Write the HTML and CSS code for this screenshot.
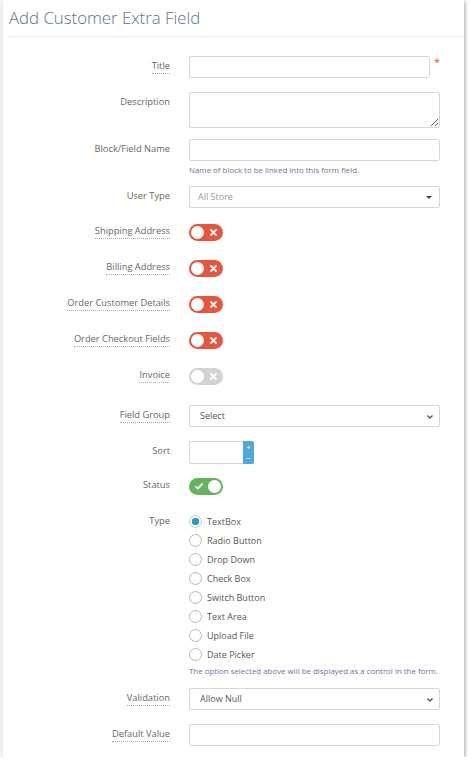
FILE: index.html
```html
<!DOCTYPE html>
<html lang="en">
<head>
  <meta charset="UTF-8">
  <meta name="viewport" content="width=device-width, initial-scale=1.0">
  <title>Add Customer Extra Field</title>
  <link rel="stylesheet" href="styles.css">
</head>
<body>
  <div class="panel">
    <div class="panel-heading">
      <h1>Add Customer Extra Field</h1>
    </div>

    <form class="form">
      <div class="row">
        <label class="label"><span class="hint">Title</span></label>
        <div class="with-star">
          <input type="text" class="control short">
          <span class="required">*</span>
        </div>
      </div>

      <div class="row">
        <label class="label">Description</label>
        <textarea class="control area"></textarea>
      </div>

      <div class="row gap-11">
        <label class="label">Block/Field Name</label>
        <div>
          <input type="text" class="control">
          <p class="help">Name of block to be linked into this form field.</p>
        </div>
      </div>

      <div class="row gap-10">
        <label class="label">User Type</label>
        <div class="control select placeholder">All Store <span class="caret"></span></div>
      </div>

      <div class="row toggle-row">
        <label class="label"><span class="hint">Shipping Address</span></label>
        <span class="toggle off"><svg width="7" height="7" viewBox="0 0 7 7"><path d="M1 1 L6 6 M6 1 L1 6" stroke="#fff" stroke-width="1.8" stroke-linecap="round"/></svg></span>
      </div>
      <div class="row toggle-row gap-16">
        <label class="label"><span class="hint">Billing Address</span></label>
        <span class="toggle off"><svg width="7" height="7" viewBox="0 0 7 7"><path d="M1 1 L6 6 M6 1 L1 6" stroke="#fff" stroke-width="1.8" stroke-linecap="round"/></svg></span>
      </div>
      <div class="row toggle-row gap-16">
        <label class="label"><span class="hint">Order Customer Details</span></label>
        <span class="toggle off"><svg width="7" height="7" viewBox="0 0 7 7"><path d="M1 1 L6 6 M6 1 L1 6" stroke="#fff" stroke-width="1.8" stroke-linecap="round"/></svg></span>
      </div>
      <div class="row toggle-row gap-16">
        <label class="label"><span class="hint">Order Checkout Fields</span></label>
        <span class="toggle off"><svg width="7" height="7" viewBox="0 0 7 7"><path d="M1 1 L6 6 M6 1 L1 6" stroke="#fff" stroke-width="1.8" stroke-linecap="round"/></svg></span>
      </div>
      <div class="row toggle-row gap-16">
        <label class="label"><span class="hint">Invoice</span></label>
        <span class="toggle disabled"><svg width="7" height="7" viewBox="0 0 7 7"><path d="M1 1 L6 6 M6 1 L1 6" stroke="#fff" stroke-width="1.8" stroke-linecap="round"/></svg></span>
      </div>

      <div class="row gap-19">
        <label class="label"><span class="hint">Field Group</span></label>
        <div class="control select">Select
          <svg class="chevron" width="8" height="6" viewBox="0 0 8 6"><path d="M1.5 1.5 L4 4 L6.5 1.5" fill="none" stroke="#555" stroke-width="1.4"/></svg>
        </div>
      </div>

      <div class="row">
        <label class="label">Sort</label>
        <div class="spinner">
          <input type="text" class="control">
          <span class="spin-btn"><span>+</span><span>&minus;</span></span>
        </div>
      </div>

      <div class="row toggle-row gap-12">
        <label class="label">Status</label>
        <span class="toggle on"><svg width="8" height="7" viewBox="0 0 8 7"><path d="M1 3.8 L3 5.6 L7 1.2" fill="none" stroke="#fff" stroke-width="1.8" stroke-linecap="round" stroke-linejoin="round"/></svg></span>
      </div>

      <div class="row gap-16">
        <label class="label radio-label">Type</label>
        <div>
          <ul class="radios">
            <li><span class="radio checked"></span>TextBox</li>
            <li><span class="radio"></span>Radio Button</li>
            <li><span class="radio"></span>Drop Down</li>
            <li><span class="radio"></span>Check Box</li>
            <li><span class="radio"></span>Switch Button</li>
            <li><span class="radio"></span>Text Area</li>
            <li><span class="radio"></span>Upload File</li>
            <li><span class="radio"></span>Date Picker</li>
          </ul>
          <p class="help">The option selected above will be displayed as a control in the form.</p>
        </div>
      </div>

      <div class="row gap-11">
        <label class="label"><span class="hint">Validation</span></label>
        <div class="control select">Allow Null
          <svg class="chevron" width="8" height="6" viewBox="0 0 8 6"><path d="M1.5 1.5 L4 4 L6.5 1.5" fill="none" stroke="#555" stroke-width="1.4"/></svg>
        </div>
      </div>

      <div class="row">
        <label class="label"><span class="hint">Default Value</span></label>
        <input type="text" class="control">
      </div>
    </form>
  </div>
</body>
</html>
```

FILE: styles.css
```css
body {
  margin: 0;
  background: #fff;
  font-family: "Open Sans", Arial, sans-serif;
  font-size: 9.3px;
  color: #555;
}
.panel {
  margin-left: 2px;
  width: 462px;
  height: 757px;
  background: #fff;
  box-shadow: 1px 1px 4px rgba(0, 0, 0, 0.35);
  border-left: 1px solid #eee;
  box-sizing: border-box;
}
.panel-heading {
  margin-left: 6px;
  height: 36px;
  border-bottom: 1px solid #eee;
}
h1 {
  margin: 0;
  padding-top: 6px;
  font-size: 16.8px;
  font-weight: 300;
  color: #5d7185;
}
.form {
  padding-top: 19px;
}
.row {
  display: grid;
  grid-template-columns: 167px 251px;
  column-gap: 19px;
  margin-top: 14px;
}
.row:first-child {
  margin-top: 0;
}
.gap-10 { margin-top: 10px; }
.gap-11 { margin-top: 11px; }
.gap-12 { margin-top: 12px; }
.gap-16 { margin-top: 16px; }
.gap-19 { margin-top: 19px; }
.label {
  text-align: right;
  line-height: 14px;
  padding-top: 3px;
  color: #666;
}
.hint {
  border-bottom: 1px dotted #aaa;
  padding-bottom: 1px;
}
.control {
  display: block;
  box-sizing: border-box;
  width: 251px;
  height: 22px;
  margin: 0;
  border: 1px solid #d6d6d6;
  border-radius: 2px;
  font-family: inherit;
  font-size: 9px;
  color: #555;
  background: #fff;
}
.with-star {
  display: flex;
  align-items: flex-start;
}
.control.short {
  width: 244px;
}
.required {
  color: #e0534d;
  font-size: 11px;
  line-height: 12px;
  margin-left: 4px;
}
.area {
  height: 36px;
  resize: vertical;
}
.help {
  margin: 3px 0 0;
  font-size: 7.9px;
  line-height: 12px;
  color: #7d6c9c;
  white-space: nowrap;
}
.select {
  position: relative;
  line-height: 20px;
  padding-left: 10px;
}
.placeholder {
  color: #999;
  padding-left: 8px;
}
.caret {
  position: absolute;
  right: 7px;
  top: 9px;
  border-left: 3px solid transparent;
  border-right: 3px solid transparent;
  border-top: 3px solid #444;
}
.chevron {
  position: absolute;
  right: 5px;
  top: 8px;
}
.toggle-row {
  height: 20px;
}
.toggle-row .label {
  padding-top: 2px;
}
.toggle {
  position: relative;
  box-sizing: border-box;
  display: flex;
  align-items: center;
  width: 34px;
  height: 17px;
  margin-top: 2px;
  border-radius: 9px;
}
.toggle::before {
  content: "";
  position: absolute;
  top: 2px;
  width: 13px;
  height: 13px;
  border-radius: 50%;
  background: #fff;
}
.toggle.off {
  background: #e8553e;
  padding-left: 21px;
}
.toggle.off::before,
.toggle.disabled::before {
  left: 2px;
}
.toggle.disabled {
  background: #d3d3d3;
  padding-left: 21px;
}
.toggle.on {
  background: #63b460;
  padding-left: 6px;
}
.toggle.on::before {
  right: 2px;
}
.spinner {
  display: flex;
  width: 65px;
}
.spinner .control {
  width: 54px;
  height: 23px;
  border-right: none;
  border-radius: 2px 0 0 2px;
}
.spin-btn {
  width: 11px;
  height: 23px;
  background: #4fa9dd;
  border-radius: 0 2px 2px 0;
  color: #fff;
  font-size: 8px;
  line-height: 10px;
  display: flex;
  flex-direction: column;
  align-items: center;
  justify-content: space-between;
  padding: 1px 0;
  box-sizing: border-box;
}
.radio-label {
  padding-top: 2px;
}
.radios {
  list-style: none;
  margin: 0;
  padding: 0;
}
.radios li {
  display: flex;
  align-items: center;
  height: 19px;
  font-size: 9px;
  color: #555;
}
.radio {
  box-sizing: border-box;
  width: 13px;
  height: 13px;
  border: 1px solid #b8b8b8;
  border-radius: 50%;
  margin-right: 5px;
  background: #fff;
}
.radio.checked {
  border-color: #c8c8c8;
  background: radial-gradient(circle, #2a9ec4 0 3.5px, #fff 4px);
}
.radios + .help {
  margin-top: 1px;
}
```
